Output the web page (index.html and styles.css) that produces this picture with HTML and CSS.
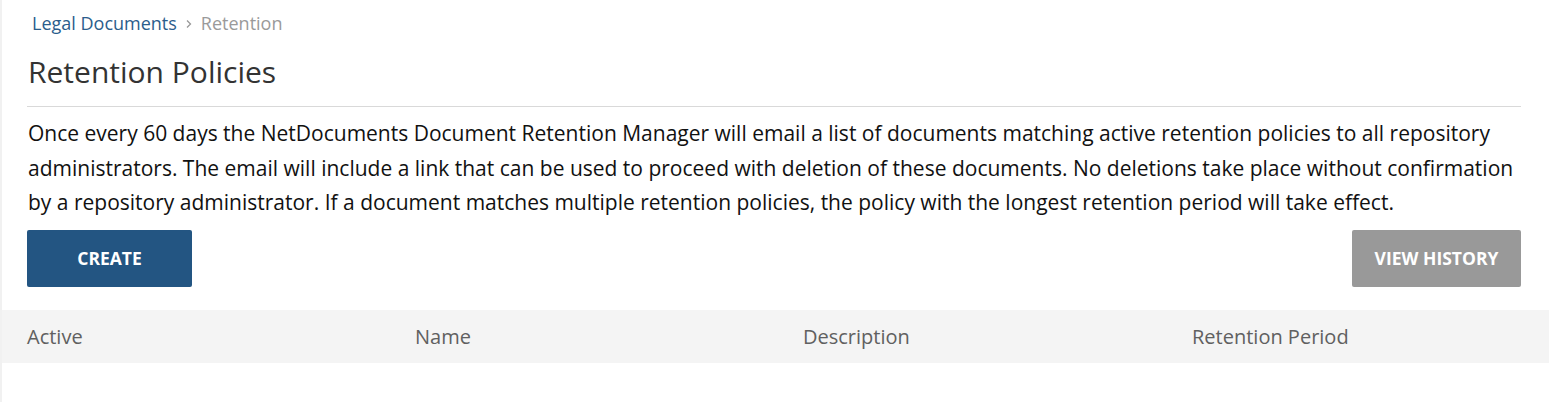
FILE: index.html
```html
<!DOCTYPE html>
<html>
<head>
<meta charset="utf-8">
<link rel="stylesheet" href="styles.css">
</head>
<body>
<div class="page">
  <div class="content">
    <nav class="crumbs">
      <a class="crumb-link">Legal Documents</a>
      <svg class="chev" width="8" height="10" viewBox="0 0 8 10"><path d="M2 1.5 L5.5 5 L2 8.5" fill="none" stroke="#999" stroke-width="1.3"/></svg>
      <span class="crumb-current">Retention</span>
    </nav>
    <h1 class="title">Retention Policies</h1>
    <p class="intro">Once every 60 days the NetDocuments Document Retention Manager will email a list of documents matching active retention policies to all repository administrators. The email will include a link that can be used to proceed with deletion of these documents. No deletions take place without confirmation by a repository administrator. If a document matches multiple retention policies, the policy with the longest retention period will take effect.</p>
    <div class="actions">
      <button class="btn btn-primary">CREATE</button>
      <button class="btn btn-secondary">VIEW HISTORY</button>
    </div>
  </div>
  <div class="table-head">
    <div class="th">Active</div>
    <div class="th">Name</div>
    <div class="th">Description</div>
    <div class="th">Retention Period</div>
  </div>
</div>
</body>
</html>
```

FILE: styles.css
```css
html, body {
  margin: 0;
  padding: 0;
  background: #fff;
  font-family: "Open Sans", "Liberation Sans", sans-serif;
}
.page {
  border-left: 2px solid #f1f1f1;
  min-height: 402px;
  box-sizing: border-box;
}
.content {
  padding: 0 28px 0 25px;
}
.crumbs {
  display: flex;
  align-items: center;
  gap: 8px;
  padding: 11px 0 0 5px;
  height: 24px;
  font-size: 18px;
  line-height: 24px;
}
.crumb-link {
  color: #2b5d8c;
}
.crumb-current {
  color: #9a9a9a;
}
.chev {
  margin-top: 2px;
}
.title {
  margin: 0;
  padding: 19px 0 16px 1px;
  font-size: 30px;
  font-weight: 400;
  line-height: 36px;
  color: #333;
  border-bottom: 1px solid #d9d9d9;
}
.intro {
  margin: 9px 0 0 1px;
  font-size: 21px;
  line-height: 34.5px;
  color: #111;
}
.actions {
  display: flex;
  justify-content: space-between;
  margin-top: 10px;
}
.btn {
  height: 57px;
  border: none;
  border-radius: 2px;
  color: #fff;
  font-family: "Open Sans", "Liberation Sans", sans-serif;
  font-size: 17.5px;
  font-weight: 700;
  padding: 0;
}
.btn-primary {
  width: 165px;
  background: #235582;
}
.btn-secondary {
  width: 169px;
  background: #999;
}
.table-head {
  display: grid;
  grid-template-columns: 388px 388px 389px 1fr;
  margin-top: 23px;
  height: 53px;
  align-items: center;
  background: #f4f4f4;
  padding-left: 25px;
}
.th {
  font-size: 20px;
  color: #606060;
}
```
